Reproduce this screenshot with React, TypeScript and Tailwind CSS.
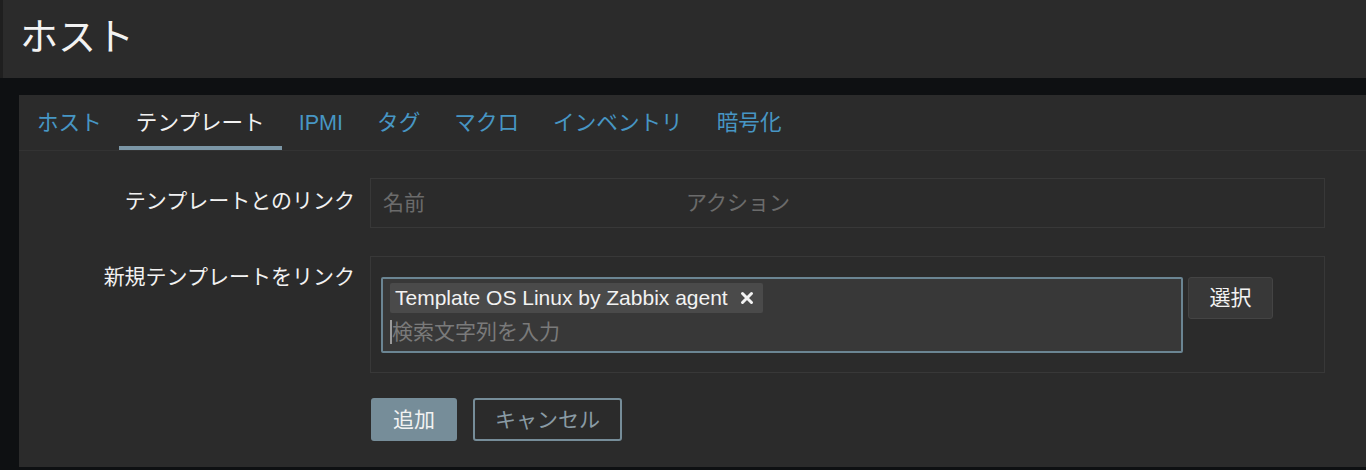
import React from 'react';

const tabs = ['ホスト', 'テンプレート', 'IPMI', 'タグ', 'マクロ', 'インベントリ', '暗号化'];

export default function App() {
    const font = { fontFamily: '"Liberation Sans", "Noto Sans CJK JP", sans-serif' };
    return (
        <div className="w-[1366px] h-[470px] overflow-hidden bg-[#0e1012] text-[#f2f2f2]" style={font}>
            {/* header */}
            <div className="h-[78px] bg-[#2b2b2b] flex items-center pl-[17px] border-l-[3px] border-[#1f1f1f]">
                <h1 className="text-[38px] leading-none text-[#f2f2f2] -mt-[4px]">ホスト</h1>
            </div>

            <div className="pl-[19px] pt-[17px]">
                <div className="bg-[#2b2b2b] h-[372px]">
                    {/* tabs */}
                    <div className="flex items-end h-[56px] border-b border-[#333333] pl-[1px]">
                        {tabs.map((t, i) => (
                            <div
                                key={t}
                                className={
                                    i === 1
                                        ? 'px-[17px] h-full flex items-center text-[21.6px] text-[#f2f2f2] border-b-[4px] border-[#7b96a6] pt-[6px]'
                                        : 'px-[17px] h-full flex items-center text-[21.6px] text-[#4796c4] pt-[2px]'
                                }
                            >
                                {t}
                            </div>
                        ))}
                    </div>

                    {/* form */}
                    <div className="pt-[27px]">
                        <div className="flex items-start">
                            <div className="w-[351px] text-right pr-[15px] text-[21px] pt-[7px]">テンプレートとのリンク</div>
                            <div className="w-[955px] h-[50px] border border-[#383838] flex items-center text-[21px] text-[#6b6b6b]">
                                <span className="pl-[12px] w-[315px]">名前</span>
                                <span>アクション</span>
                            </div>
                        </div>

                        <div className="flex items-start mt-[28px]">
                            <div className="w-[351px] text-right pr-[15px] text-[21px] pt-[5px]">新規テンプレートをリンク</div>
                            <div className="w-[955px] h-[117px] border border-[#383838] flex items-start pt-[20px] pl-[10px]">
                                <div className="w-[802px] h-[76px] bg-[#383838] border-2 border-[#6b8593] rounded-[2px] px-[7px] pt-[4px]">
                                    <div className="inline-flex items-center h-[30px] bg-[#4a4a4a] rounded-[2px] pl-[5px] pr-[9px] text-[21px] text-[#f2f2f2]">
                                        <span>Template OS Linux by Zabbix agent</span>
                                        <svg className="ml-[12px]" width="14" height="14" viewBox="0 0 14 14">
                                            <path d="M2.5 2.5 L11.5 11.5 M11.5 2.5 L2.5 11.5" stroke="#f2f2f2" strokeWidth="3" strokeLinecap="round" />
                                        </svg>
                                    </div>
                                    <div className="flex items-center mt-[3px] text-[21px] text-[#7a7a7a] leading-[32px]">
                                        <span className="w-[2px] h-[24px] bg-[#9a9a9a]"></span>
                                        <span>検索文字列を入力</span>
                                    </div>
                                </div>
                                <button className="ml-[5px] w-[85px] h-[42px] bg-[#383838] border border-[#444444] rounded-[3px] text-[21px] text-[#f2f2f2]">選択</button>
                            </div>
                        </div>

                        <div className="flex items-center mt-[25px] pl-[352px] gap-[16px]">
                            <button className="w-[86px] h-[43px] bg-[#768d99] rounded-[3px] text-[21px] text-[#f2f2f2]">追加</button>
                            <button className="w-[149px] h-[43px] border-2 border-[#768d99] rounded-[3px] text-[21px] text-[#8a9ba5]">キャンセル</button>
                        </div>
                    </div>
                </div>
            </div>
        </div>
    );
}
